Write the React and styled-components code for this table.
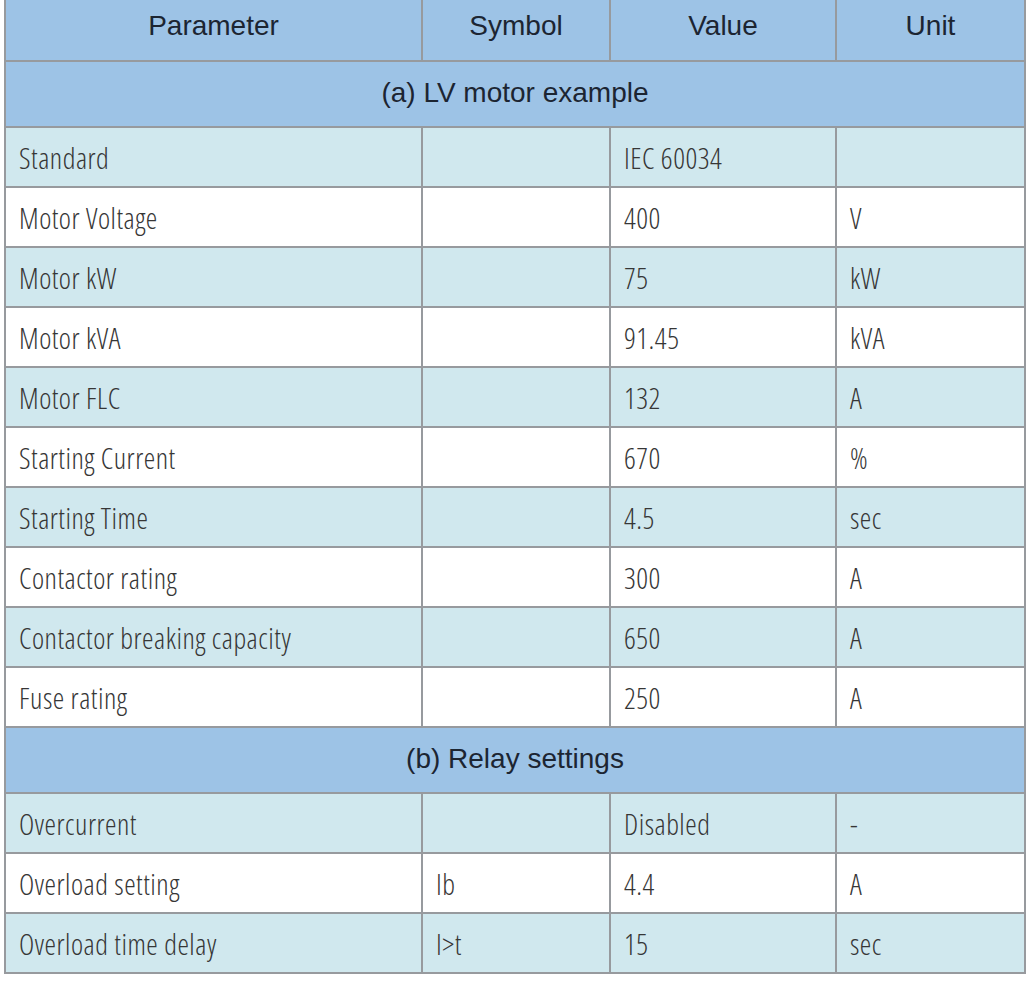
import React from "react";
import styled, { createGlobalStyle } from "styled-components";

const GlobalStyle = createGlobalStyle`
  html, body {
    margin: 0;
    padding: 0;
    background: #ffffff;
  }
  body {
    padding-left: 4px;
  }
`;

const Table = styled.table`
  width: 1020px;
  border-collapse: collapse;
  table-layout: fixed;
  font-family: "Open Sans", "Liberation Sans", sans-serif;
`;

const Col = styled.col`
  width: ${(p) => p.$w}px;
`;

const HeadCell = styled.th`
  height: 52px;
  padding: 0 0 8px;
  background: #9dc3e6;
  border: 2px solid #979a9e;
  border-top: none;
  font-family: "Liberation Sans", Arial, sans-serif;
  font-weight: 400;
  font-size: 28px;
  color: #1c2532;
  text-align: center;
  vertical-align: middle;
`;

const SectionCell = styled.td`
  height: 62px;
  padding: 0 0 2px;
  background: #9dc3e6;
  border: 2px solid #979a9e;
  font-family: "Liberation Sans", Arial, sans-serif;
  font-size: 28px;
  color: #1c2532;
  text-align: center;
  vertical-align: middle;
`;

const Cell = styled.td`
  height: 58px;
  padding: 0 13px;
  background: ${(p) => (p.$shaded ? "#d0e8ee" : "#ffffff")};
  border: 2px solid #979a9e;
  font-size: 29px;
  font-weight: 300;
  font-stretch: 75%;
  letter-spacing: 0.5px;
  color: #363636;
  text-align: left;
  vertical-align: middle;
  white-space: nowrap;
  overflow: hidden;
`;

const columns = [417, 188, 226, 189];

const sections = [
  {
    title: "(a) LV motor example",
    rows: [
      ["Standard", "", "IEC 60034", ""],
      ["Motor Voltage", "", "400", "V"],
      ["Motor kW", "", "75", "kW"],
      ["Motor kVA", "", "91.45", "kVA"],
      ["Motor FLC", "", "132", "A"],
      ["Starting Current", "", "670", "%"],
      ["Starting Time", "", "4.5", "sec"],
      ["Contactor rating", "", "300", "A"],
      ["Contactor breaking capacity", "", "650", "A"],
      ["Fuse rating", "", "250", "A"],
    ],
  },
  {
    title: "(b) Relay settings",
    rows: [
      ["Overcurrent", "", "Disabled", "-"],
      ["Overload setting", "Ib", "4.4", "A"],
      ["Overload time delay", "I>t", "15", "sec"],
    ],
  },
];

const App = () => {
  return (
    <>
      <GlobalStyle />
      <Table>
        <colgroup>
          {columns.map((w, i) => (
            <Col key={i} $w={w} />
          ))}
        </colgroup>
        <thead>
          <tr>
            <HeadCell>Parameter</HeadCell>
            <HeadCell>Symbol</HeadCell>
            <HeadCell>Value</HeadCell>
            <HeadCell>Unit</HeadCell>
          </tr>
        </thead>
        <tbody>
          {sections.map((section) => (
            <React.Fragment key={section.title}>
              <tr>
                <SectionCell colSpan={4}>{section.title}</SectionCell>
              </tr>
              {section.rows.map((row, i) => (
                <tr key={row[0]}>
                  {row.map((text, j) => (
                    <Cell key={j} $shaded={i % 2 === 0}>
                      {text}
                    </Cell>
                  ))}
                </tr>
              ))}
            </React.Fragment>
          ))}
        </tbody>
      </Table>
    </>
  );
};

export default App;
